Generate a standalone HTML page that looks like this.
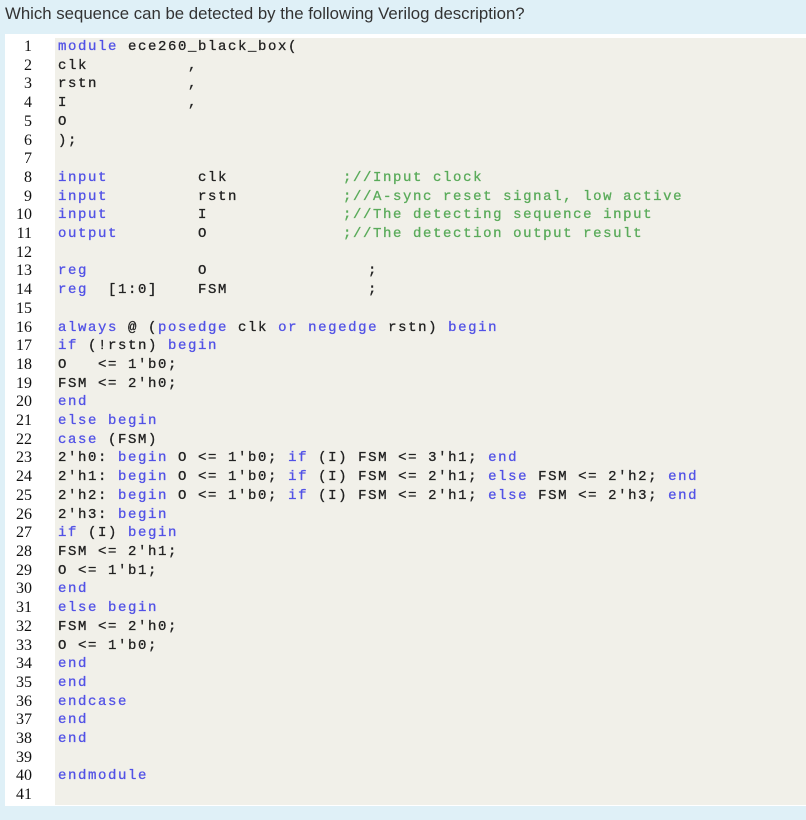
<!DOCTYPE html>
<html><head><meta charset="utf-8"><style>
body{margin:0;width:806px;height:820px;background:#dff0f7;position:relative;overflow:hidden;font-family:"Liberation Sans",sans-serif}
.q{position:absolute;left:5px;top:4px;font-size:16.8px;color:#333}
.panel{position:absolute;left:5px;top:34px;width:801px;height:772px;background:#fff}
.code{position:absolute;left:55px;top:38px;width:751px;height:767px;background:#f1f0e9}
.nums{position:absolute;left:6px;top:38px;width:26px;text-align:right;font-family:"Liberation Serif",serif;font-size:16px;line-height:18.7px;color:#111;margin:0;letter-spacing:0}
pre{position:absolute;left:58px;top:38px;margin:0;font-family:"Liberation Mono",monospace;font-size:14px;letter-spacing:1.6px;line-height:18.7px;color:#222;-webkit-text-stroke:0.3px}
.k{color:#5252e6}.c{color:#5aab5a;margin-left:5px}
</style></head><body>
<div class="q">Which sequence can be detected by the following Verilog description?</div>
<div class="panel"></div><div class="code"></div>
<pre class="nums" style="-webkit-text-stroke:0">1
2
3
4
5
6
7
8
9
10
11
12
13
14
15
16
17
18
19
20
21
22
23
24
25
26
27
28
29
30
31
32
33
34
35
36
37
38
39
40
41</pre>
<pre><span class="k">module</span> ece260_black_box(
clk          ,
rstn         ,
I            ,
O
);

<span class="k">input</span>         clk           <span class="c">;//Input clock</span>
<span class="k">input</span>         rstn          <span class="c">;//A-sync reset signal, low active</span>
<span class="k">input</span>         I             <span class="c">;//The detecting sequence input</span>
<span class="k">output</span>        O             <span class="c">;//The detection output result</span>

<span class="k">reg</span>           O                ;
<span class="k">reg</span>  [1:0]    FSM              ;

<span class="k">always</span> @ (<span class="k">posedge</span> clk <span class="k">or</span> <span class="k">negedge</span> rstn) <span class="k">begin</span>
<span class="k">if</span> (!rstn) <span class="k">begin</span>
O   &lt;= 1'b0;
FSM &lt;= 2'h0;
<span class="k">end</span>
<span class="k">else</span> <span class="k">begin</span>
<span class="k">case</span> (FSM)
2'h0: <span class="k">begin</span> O &lt;= 1'b0; <span class="k">if</span> (I) FSM &lt;= 3'h1; <span class="k">end</span>
2'h1: <span class="k">begin</span> O &lt;= 1'b0; <span class="k">if</span> (I) FSM &lt;= 2'h1; <span class="k">else</span> FSM &lt;= 2'h2; <span class="k">end</span>
2'h2: <span class="k">begin</span> O &lt;= 1'b0; <span class="k">if</span> (I) FSM &lt;= 2'h1; <span class="k">else</span> FSM &lt;= 2'h3; <span class="k">end</span>
2'h3: <span class="k">begin</span>
<span class="k">if</span> (I) <span class="k">begin</span>
FSM &lt;= 2'h1;
O &lt;= 1'b1;
<span class="k">end</span>
<span class="k">else</span> <span class="k">begin</span>
FSM &lt;= 2'h0;
O &lt;= 1'b0;
<span class="k">end</span>
<span class="k">end</span>
<span class="k">endcase</span>
<span class="k">end</span>
<span class="k">end</span>

<span class="k">endmodule</span>
</pre>
</body></html>
